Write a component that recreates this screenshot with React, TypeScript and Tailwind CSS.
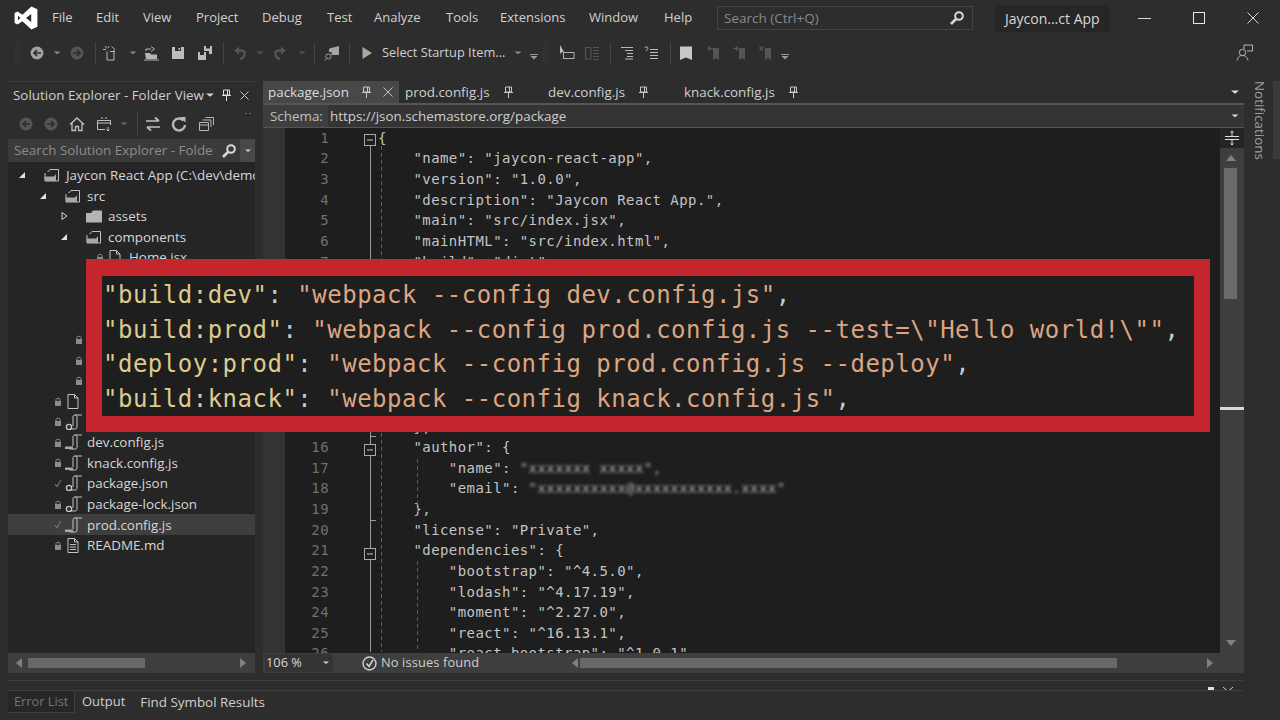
import React from "react";

const ui = "font-['Open_Sans','Noto_Sans',sans-serif]";
const mono = "font-['DejaVu_Sans_Mono','Liberation_Mono',monospace]";

type P = { c?: string };
const I = ({ children, w = 16, h = 16, cls = "" }: { children: React.ReactNode; w?: number; h?: number; cls?: string }) => (
  <svg width={w} height={h} viewBox={`0 0 ${w} ${h}`} fill="none" className={"shrink-0 " + cls}>{children}</svg>
);
const Caret = ({ c = "#8a8a8a", w = 3.5 }: P & { w?: number }) => (
  <I><polygon points={`${8 - w},6.5 ${8 + w},6.5 8,${6.5 + w * 0.8}`} fill={c} /></I>
);
const Grip = () => (
  <svg width="6" height="24" className="shrink-0" fill="none"><path d="M1 1V23M4 3V23" stroke="#4a4a4a" strokeDasharray="1 2" /></svg>
);
const Sep = () => <div className="w-px h-[23px] bg-[#454545] shrink-0" />;
const Circ = ({ c, dir = 1 }: { c: string; dir?: number }) => (
  <I>
    <circle cx="8" cy="8" r="6.5" fill={c} />
    <path d={dir > 0 ? "M12 8H5M8 5L5 8L8 11" : "M4 8H11M8 5L11 8L8 11"} stroke="#2d2d2d" strokeWidth="1.7" />
  </I>
);
const Overflow = () => (
  <I><path d="M4 9.5H12" stroke="#999" /><polygon points="4.5,11 11.5,11 8,14.5" fill="#999" /></I>
);
const NewProj = () => (
  <I>
    <path d="M5 6.5V15H12V5" stroke="#b5b5b5" />
    <path d="M8 6.5H13M3 1L5 3.5M1 4.5H4M7 1L6 3M9.5 1.5L13 4.5" stroke="#b5b5b5" />
  </I>
);
const Open = () => (
  <I>
    <path d="M1 8H6L7 9.5H13V14H2Z" fill="#b5b5b5" />
    <path d="M2 6V4H7M7 1.5L10.5 4L7 6.5" stroke="#b5b5b5" />
    <path d="M0 15H15" stroke="#b5b5b5" />
  </I>
);
const Save = () => (
  <I><path fillRule="evenodd" d="M2 2H14V14H2ZM5 2V6H11V2ZM8.5 3H10V5H8.5Z" fill="#bdbdbd" /></I>
);
const SaveAll = () => (
  <I><path fillRule="evenodd" d="M7 1H15V9H12V6H7ZM9 1V3.5H13V1ZM1 7H9V15H1ZM3 7V10H7V7Z" fill="#bdbdbd" /></I>
);
const Undo = ({ flip = false }: { flip?: boolean }) => (
  <I cls={flip ? "-scale-x-100" : ""}>
    <path d="M4 5.5H9.5C14 5.5 14 12.5 8 14" stroke="#555" strokeWidth="2.4" />
    <polygon points="7,1.5 7,9.5 2,5.5" fill="#555" />
  </I>
);
const FindWin = () => (
  <I>
    <circle cx="4.5" cy="11.5" r="2.6" stroke="#a0a0a0" />
    <path d="M2.5 13.5L0.5 15.5" stroke="#a0a0a0" />
    <path d="M7 3L15 1V10H7.5V7H5V4Z" fill="#a5a5a5" />
  </I>
);
const Play = () => <I><polygon points="3.5,2 13,8 3.5,14" fill="#a8a8a8" /></I>;
const Cursor = () => (
  <I><polygon points="1,0 1,9 3,7 5,7" fill="#bbb" /><rect x="4.5" y="7.5" width="10.5" height="6" stroke="#b0b0b0" /></I>
);
const DimList = () => (
  <I><path d="M1.5 2.5H7V14H1.5ZM9 2.5H15M9 5.5H15M9 8.5H15M9 11.5H15M9 14.5H15" stroke="#555" /></I>
);
const Lines = ({ q = false }: { q?: boolean }) => (
  <I>
    {q ? <path d="M1 3C1 1.5 4 1.5 4 3C4 4.5 2.5 4.5 2.5 6" stroke="#bbb" /> : <path d="M2 2.5H14" stroke="#bbb" />}
    <path d={q ? "M6 4.5H14M6 7.5H14M6 10.5H14M6 13.5H14" : "M6 5.5H14M8 8.5H14M8 11.5H14M6 14H14"} stroke="#bbb" />
  </I>
);
const Bookmark = () => <I><path d="M2 1.5H14V15L8 12.5L2 15Z" fill="#c8c8c8" /></I>;
const DimMark = ({ kind }: { kind: number }) => (
  <I>
    <path d="M7 3H13V15L10 13L7 15Z" fill="#555" />
    {kind === 0 && <path d="M7 3.5H2M4 1.5L2 3.5L4 5.5" stroke="#555" strokeWidth="1.3" />}
    {kind === 1 && <path d="M1 3.5H6M4 1.5L6 3.5L4 5.5" stroke="#555" strokeWidth="1.3" />}
    {kind === 2 && <path d="M1.5 1.5L5.5 5.5M5.5 1.5L1.5 5.5" stroke="#555" strokeWidth="1.3" />}
  </I>
);
const LiveShare = () => (
  <svg width="18" height="18" viewBox="0 0 18 18" fill="none" className="shrink-0">
    <circle cx="6.5" cy="8.5" r="3.2" stroke="#b5b5b5" />
    <path d="M1 16.5C2 12.5 4 11.5 6.5 11.5C9 11.5 11 12.5 12 16.5" stroke="#b5b5b5" />
    <path d="M8 5V1H16.5V7H11" stroke="#b5b5b5" />
  </svg>
);
const Pin = ({ c = "#c8c8c8" }: P) => (
  <I w={9} h={12}>
    <path d="M1.5 1H7.5V6H1.5Z" stroke={c} />
    <path d="M5.5 1V6M0 6.5H9M4.5 7V12" stroke={c} />
  </I>
);
const Mag = ({ c = "#d8d8d8" }: P) => (
  <I>
    <circle cx="10" cy="6" r="3.8" stroke={c} strokeWidth="2" />
    <path d="M7 9L2 14" stroke={c} strokeWidth="2.6" />
  </I>
);
const VsLogo = () => (
  <svg width="24" height="24" viewBox="0 0 24 24" className="shrink-0">
    <path
      fillRule="evenodd"
      fill="#ffffff"
      d="M17.4 .6L23.4 3.2V20.8L17.4 23.4L8.4 15.2L3.6 18.6L.6 17V7L3.6 5.4L8.4 8.8ZM17.2 8L12 12L17.2 16ZM4 9.8V14.2L6.4 12Z"
    />
  </svg>
);

const FolderOpen = () => (
  <I w={17} h={14}>
    <path d="M1 5V13H14.5V1.5H6L4.5 3.5H3.5" stroke="#c0c0c0" />
    <path d="M0.5 8.5H10L12 6V13H1Z" fill="#a8a8a8" />
  </I>
);
const FolderShut = () => (
  <I w={17} h={13}><path d="M0 3H5L7 .5H16V12.5H0Z" fill="#b4b4b4" /></I>
);
const JsFile = ({ dot = false }: { dot?: boolean }) => (
  <I w={18} h={16}>
    <path d="M5 12V2.5C5 1.5 6 1 7 1H16M7 1C8 1 9 1.5 9 3V13.5C9 14.5 8 15 7 15H1.5" stroke="#c4c4c4" transform="translate(4 0)" />
    {dot ? (
      <circle cx="5" cy="13" r="2.6" stroke="#c4c4c4" strokeWidth="1.4" />
    ) : (
      <path d="M1 12.5H9V15H1Z" fill="#a8a8a8" />
    )}
  </I>
);
const Doc = ({ lines = false }: { lines?: boolean }) => (
  <I w={12} h={15}>
    <path d="M1 .5H7.5L11 4V14.5H1ZM7.5 .5V4H11" stroke="#c4c4c4" />
    {lines && <path d="M3 6.5H9M3 9H9M3 11.5H9" stroke="#c4c4c4" />}
  </I>
);
const Lock = () => (
  <I w={8} h={9}><path d="M2 4V2.5C2 .8 6 .8 6 2.5V4" stroke="#8c8c8c" /><rect x="1" y="4" width="6" height="5" fill="#8c8c8c" /></I>
);
const Check = () => (
  <I w={8} h={9}><path d="M1 5L3 7.5L7 1" stroke="#777" strokeWidth="1.1" /></I>
);
const ExpOpen = () => <I w={10} h={10}><polygon points="8,2 8,8 2,8" fill="#e0e0e0" /></I>;
const ExpShut = () => <I w={10} h={10}><polygon points="3,1.5 8,5 3,8.5" stroke="#d8d8d8" /></I>;

const TreeRow = ({
  pl, exp, status, icon, text, selected,
}: { pl: string; exp?: React.ReactNode; status?: React.ReactNode; icon?: React.ReactNode; text?: string; selected?: boolean }) => (
  <div className={`flex items-center h-[20.55px] shrink-0 ${pl} ${selected ? "bg-[#3e3e3e]" : ""}`}>
    <div className="w-[10px] mr-[6px] flex justify-center shrink-0">{exp}</div>
    <div className="w-[8px] mr-[3px] flex justify-center shrink-0">{status}</div>
    <div className="w-[16px] mr-[6px] flex justify-center shrink-0">{icon}</div>
    <span className="whitespace-nowrap text-[13.4px] text-[#d6d6d6]">{text}</span>
  </div>
);

const TreePanel = () => (
  <div className="flex flex-col flex-1 min-h-0 overflow-hidden bg-[#252526] pt-[3px]">
    <TreeRow pl="pl-[9px]" exp={<ExpOpen />} icon={<FolderOpen />} text="Jaycon React App (C:\dev\demo" />
    <TreeRow pl="pl-[30px]" exp={<ExpOpen />} icon={<FolderOpen />} text="src" />
    <TreeRow pl="pl-[51px]" exp={<ExpShut />} icon={<FolderShut />} text="assets" />
    <TreeRow pl="pl-[51px]" exp={<ExpOpen />} icon={<FolderOpen />} text="components" />
    <TreeRow pl="pl-[72px]" status={<Lock />} icon={<Doc />} text="Home.jsx" />
    <TreeRow pl="pl-[30px]" />
    <TreeRow pl="pl-[30px]" />
    <TreeRow pl="pl-[30px]" />
    <TreeRow pl="pl-[51px]" status={<Lock />} />
    <TreeRow pl="pl-[51px]" status={<Lock />} />
    <TreeRow pl="pl-[51px]" status={<Lock />} />
    <TreeRow pl="pl-[30px]" status={<Lock />} icon={<Doc />} />
    <TreeRow pl="pl-[30px]" status={<Lock />} icon={<JsFile dot />} />
    <TreeRow pl="pl-[30px]" status={<Lock />} icon={<JsFile />} text="dev.config.js" />
    <TreeRow pl="pl-[30px]" status={<Lock />} icon={<JsFile />} text="knack.config.js" />
    <TreeRow pl="pl-[30px]" status={<Check />} icon={<JsFile dot />} text="package.json" />
    <TreeRow pl="pl-[30px]" status={<Lock />} icon={<JsFile dot />} text="package-lock.json" />
    <TreeRow pl="pl-[30px]" status={<Check />} icon={<JsFile />} text="prod.config.js" selected />
    <TreeRow pl="pl-[30px]" status={<Lock />} icon={<Doc lines />} text="README.md" />
  </div>
);

const HScroll = ({ thumb, cls }: { thumb: string; cls: string }) => (
  <div className={`flex items-center h-[20px] bg-[#3e3e3e] ${cls}`}>
    <I w={10} h={12} cls="ml-[5px] mr-[5px]"><polygon points="9,1 9,11 3,6" fill="#808080" /></I>
    <div className={`h-[10px] bg-[#686868] ${thumb}`} />
    <I w={10} h={12} cls="ml-auto mr-[7px]"><polygon points="2,1 2,11 8,6" fill="#808080" /></I>
  </div>
);

const lines: [string, React.ReactNode][] = [
  ["1", "{"],
  ["2", `    "name": "jaycon-react-app",`],
  ["3", `    "version": "1.0.0",`],
  ["4", `    "description": "Jaycon React App.",`],
  ["5", `    "main": "src/index.jsx",`],
  ["6", `    "mainHTML": "src/index.html",`],
  ["7", `    "build": "dist",`],
  ["8", ""], ["9", ""], ["10", ""], ["11", ""], ["12", ""], ["13", ""], ["14", ""],
  ["15", `    },`],
  ["16", `    "author": {`],
  ["17", <>{`        "name": `}<span className="blur-[1.6px] text-[#b4b4b4]">{`"xxxxxxx xxxxx",`}</span></>],
  ["18", <>{`        "email": `}<span className="blur-[1.6px] text-[#b4b4b4]">{`"xxxxxxxxxx@xxxxxxxxxxx.xxxx"`}</span></>],
  ["19", `    },`],
  ["20", `    "license": "Private",`],
  ["21", `    "dependencies": {`],
  ["22", `        "bootstrap": "^4.5.0",`],
  ["23", `        "lodash": "^4.17.19",`],
  ["24", `        "moment": "^2.27.0",`],
  ["25", `        "react": "^16.13.1",`],
  ["26", `        "react-bootstrap": "^1.0.1",`],
];

const FoldBox = ({ y }: { y: number }) => (
  <g>
    <rect x="79.5" y={y + 0.5} width="11" height="11" fill="#1e1e1e" stroke="#a8a8a8" />
    <path d={`M82 ${y + 6}H88`} stroke="#c8c8c8" />
  </g>
);

const Guides = () => (
  <svg className="absolute left-0 top-0 pointer-events-none" width="160" height="524" fill="none">
    <path d="M85.5 18V524M85.5 308.5H91M85.5 392.5H91" stroke="#9a9a9a" />
    <path d="M96.5 18V524" stroke="#5c5c5c" strokeDasharray="4 3" />
    <path d="M132.5 331V388M132.5 433V524" stroke="#5c5c5c" strokeDasharray="4 3" />
    <FoldBox y={6} />
    <FoldBox y={316} />
    <FoldBox y={420} />
  </svg>
);

const Tk = ({ t, c }: { t: string; c: string }) => <span className={c}>{t}</span>;
const key = "text-[#dccb8d]";
const str = "text-[#dba582]";
const pun = "text-[#b9cfd8]";
const BigLine = ({ k, v }: { k: string; v: string }) => (
  <div className={`h-[34.5px] flex items-center whitespace-pre ${mono} text-[24px] tracking-[0.5px] -ml-[1px]`}>
    <Tk t={k} c={key} /><Tk t=": " c={pun} /><Tk t={v} c={str} /><Tk t="," c={pun} />
  </div>
);

const menu: [string, string][] = [
  ["File", "w-[44px]"], ["Edit", "w-[47px]"], ["View", "w-[53px]"], ["Project", "w-[66px]"], ["Debug", "w-[65px]"],
  ["Test", "w-[47px]"], ["Analyze", "w-[72px]"], ["Tools", "w-[54px]"], ["Extensions", "w-[89px]"], ["Window", "w-[75px]"], ["Help", "w-[53px]"],
];

export default function App() {
  return (
    <div className={`relative w-[1280px] h-[720px] overflow-hidden bg-[#2d2d2d] text-[#d4d4d4] flex flex-col ${ui}`}>
      {/* Title bar */}
      <div className="flex items-center h-[36px] shrink-0">
        <div className="w-[52px] pl-[14px] shrink-0"><VsLogo /></div>
        {menu.map(([m, w]) => (
          <span key={m} className={`${w} text-[13px] text-[#d0d0d0] shrink-0`}>{m}</span>
        ))}
        <div className="flex items-center justify-between w-[256px] h-[24px] border border-[#424242] pl-[6px] pr-[7px] shrink-0">
          <span className="text-[13.5px] text-[#8a8a8a]">Search (Ctrl+Q)</span>
          <Mag />
        </div>
        <div className="flex items-center w-[115px] h-[27px] ml-[22px] pl-[10px] bg-[#262626] text-[14px] text-[#d8d8d8] shrink-0 whitespace-nowrap">Jaycon...ct App</div>
        <div className="ml-[28px] w-[13px] h-px bg-[#d8d8d8] shrink-0" />
        <div className="ml-[42px] w-[12px] h-[12px] border border-[#e8e8e8] shrink-0" />
        <svg width="12" height="12" className="ml-[42px] shrink-0" fill="none"><path d="M.5 .5L11.5 11.5M11.5 .5L.5 11.5" stroke="#d8d8d8" /></svg>
      </div>

      {/* Toolbar */}
      <div className="flex items-center h-[34px] shrink-0 pl-[15px] pr-[26px]">
        <Grip />
        <div className="ml-[8px]"><Circ c="#a0a0a0" /></div>
        <div className="ml-[4px]"><Caret /></div>
        <div className="ml-[4px]"><Circ c="#555555" dir={-1} /></div>
        <div className="ml-[10px]"><Sep /></div>
        <div className="ml-[6px]"><NewProj /></div>
        <div className="ml-[7px]"><Caret /></div>
        <div className="ml-[3px]"><Open /></div>
        <div className="ml-[10px]"><Save /></div>
        <div className="ml-[11px]"><SaveAll /></div>
        <div className="ml-[10px]"><Sep /></div>
        <div className="ml-[8px]"><Undo /></div>
        <div className="ml-[4px]"><Caret c="#555" /></div>
        <div className="ml-[4px]"><Undo flip /></div>
        <div className="ml-[6px]"><Caret c="#555" /></div>
        <div className="ml-[4px]"><Sep /></div>
        <div className="ml-[9px]"><FindWin /></div>
        <div className="ml-[9px]"><Sep /></div>
        <div className="ml-[9px]"><Play /></div>
        <span className="ml-[7px] w-[128px] text-[12.8px] text-[#d0d0d0] whitespace-nowrap">Select Startup Item...</span>
        <Caret />
        <Overflow />
        <div className="ml-[1px]"><Grip /></div>
        <div className="ml-[10px]"><Cursor /></div>
        <div className="ml-[9px]"><DimList /></div>
        <div className="ml-[10px]"><Sep /></div>
        <div className="ml-[8px]"><Lines /></div>
        <div className="ml-[9px]"><Lines q /></div>
        <div className="ml-[10px]"><Sep /></div>
        <div className="ml-[7px]"><Bookmark /></div>
        <div className="ml-[12px]"><DimMark kind={0} /></div>
        <div className="ml-[10px]"><DimMark kind={1} /></div>
        <div className="ml-[10px]"><DimMark kind={2} /></div>
        <div className="ml-[3px]"><Overflow /></div>
        <div className="ml-auto"><LiveShare /></div>
      </div>

      {/* Main area */}
      <div className="flex h-[592px] mt-[11px] pl-[8px] shrink-0">
        {/* Solution explorer */}
        <div className="flex flex-col w-[247px] shrink-0 border-t border-[#3c3c3c]">
          <div className="flex items-center h-[26px] pl-[5px] shrink-0">
            <span className="text-[13.4px] text-[#cfcfcf] whitespace-nowrap w-[189px]">Solution Explorer - Folder View</span>
            <Caret c="#d8d8d8" w={4} />
            <div className="ml-[4px]"><Pin c="#dcdcdc" /></div>
            <svg width="9" height="9" className="ml-[9px]" fill="none"><path d="M.5 .5L8.5 8.5M8.5 .5L.5 8.5" stroke="#c8c8c8" /></svg>
          </div>
          <div className="flex items-center h-[31px] pl-[10px] shrink-0">
            <Circ c="#555" />
            <div className="ml-[9px]"><Circ c="#555" dir={-1} /></div>
            <I w={16} h={16} cls="ml-[10px]"><path d="M1 8.5L8 2L15 8.5M3 7V14.5H6.5V10.5H9.5V14.5H13V7" stroke="#c0c0c0" strokeWidth="1.3" /></I>
            <I w={16} h={16} cls="ml-[11px]"><path d="M1.5 4.5H14.5V9M1.5 4.5V13.5H9M1.5 7H14.5" stroke="#c0c0c0" /><path d="M5 2H7M9 2H11M12 11V15M10.5 13.5L12 15L13.5 13.5" stroke="#c0c0c0" /></I>
            <div className="ml-[4px]"><Caret c="#666" /></div>
            <div className="ml-[5px]"><Sep /></div>
            <I w={16} h={16} cls="ml-[7px]"><path d="M1 5H14M10 1.5L14 5M15 11H2M6 14.5L2 11" stroke="#c0c0c0" strokeWidth="1.7" /></I>
            <I w={16} h={16} cls="ml-[10px]"><path d="M12.5 4.5A6 6 0 1 0 14 9" stroke="#b8b8b8" strokeWidth="2.4" /><polygon points="9,1 14.5,1 14.5,6.5" fill="#b8b8b8" /></I>
            <I w={16} h={16} cls="ml-[11px]"><path d="M1.5 6.5H10.5V14.5H1.5ZM1.5 9H10.5M4.5 4H13V11M7.5 1.5H15.5V9" stroke="#b8b8b8" /></I>
            <svg width="6" height="2" className="ml-auto mr-[4px] self-start mt-[5px]" fill="none"><path d="M0 .5H6" stroke="#6a6a6a" strokeDasharray="2 2" /></svg>
          </div>
          <div className="flex items-center h-[23px] bg-[#3a3a3a] pl-[6px] shrink-0">
            <span className="w-[200px] overflow-hidden whitespace-nowrap text-[13.4px] text-[#8c8c8c]">Search Solution Explorer - Folder View</span>
            <div className="ml-[7px]"><Mag /></div>
            <div className="ml-auto w-[15px] h-full bg-[#484848] flex items-center justify-center"><Caret c="#d0d0d0" w={3} /></div>
          </div>
          <TreePanel />
          <HScroll thumb="w-[117px]" cls="shrink-0" />
        </div>

        {/* Editor */}
        <div className="flex flex-col w-[981px] ml-[8px] shrink-0">
          <div className="flex items-center h-[22px] shrink-0">
            <div className="flex items-center w-[136px] h-full bg-[#484848] pl-[5px] shrink-0">
              <span className="w-[94px] pt-[1px] text-[13.4px] text-[#dcdcdc] whitespace-nowrap">package.json</span>
              <Pin c="#c8c8c8" />
              <svg width="10" height="10" className="ml-[12px]" fill="none"><path d="M.5 .5L9.5 9.5M9.5 .5L.5 9.5" stroke="#c0c0c0" /></svg>
            </div>
            <span className="ml-[6px] w-[95px] pt-[1px] text-[13.4px] text-[#cfcfcf]">prod.config.js</span>
            <div className="w-[16px] flex justify-center"><Pin /></div>
            <span className="ml-[32px] w-[87px] pt-[1px] text-[13.4px] text-[#cfcfcf]">dev.config.js</span>
            <div className="w-[16px] flex justify-center"><Pin /></div>
            <span className="ml-[33px] w-[101px] pt-[1px] text-[13.4px] text-[#cfcfcf]">knack.config.js</span>
            <div className="w-[16px] flex justify-center"><Pin /></div>
            <div className="ml-auto mr-[1px]"><Caret c="#e0e0e0" w={4} /></div>
          </div>
          <div className="h-[2px] bg-[#555555] shrink-0" />
          <div className="flex items-center h-[23px] bg-[#343434] border-b border-[#555555] shrink-0">
            <div className="flex items-center h-full w-[65px] bg-[#3e3e3e] pl-[7px] pt-[1px] text-[13.4px] text-[#c0c0c0] shrink-0">Schema:</div>
            <span className="ml-[2px] pt-[1px] text-[13.4px] text-[#cfcfcf]">https://json.schemastore.org/package</span>
            <div className="ml-auto mr-[1px]"><Caret c="#d8d8d8" w={3.5} /></div>
          </div>
          <div className="flex flex-1 min-h-0">
            <div className="w-[22px] bg-[#333333] shrink-0" />
            <div className={`relative flex-1 min-w-0 overflow-hidden bg-[#1e1e1e] ${mono} text-[14px] tracking-[0.43px] text-[#c4c4c4]`}>
              {lines.map(([n, t]) => (
                <div key={n} className="flex items-center h-[20.63px]">
                  <span className="w-[44px] text-right text-[#707070] shrink-0">{n}</span>
                  <span className="pl-[49px] whitespace-pre">{t}</span>
                </div>
              ))}
              <Guides />
            </div>
            <div className="relative flex flex-col items-center w-[24px] bg-[#3e3e3e] shrink-0">
              <div className="flex items-center justify-center w-full h-[20px] bg-[#252526]">
                <I w={14} h={16}><path d="M0 6.5H14M0 9.5H14M7 1V6M7 10V15M5.5 2.5L7 1L8.5 2.5M5.5 13.5L7 15L8.5 13.5" stroke="#e0e0e0" /></I>
              </div>
              <I w={12} h={8} cls="mt-[6px] -ml-[3px]"><polygon points="1,7 11,7 6,1" fill="#808080" /></I>
              <div className="w-[13px] h-[131px] mt-[6px] -ml-[3px] bg-[#6a6a6a]" />
              <div className="w-full h-[3px] mt-[108px] bg-[#d8d8d8]" />
              <I w={12} h={8} cls="mt-auto mb-[6px] -ml-[3px]"><polygon points="1,1 11,1 6,7" fill="#808080" /></I>
            </div>
          </div>
          <div className="flex items-center h-[20px] bg-[#3e3e3e] shrink-0">
            <div className="flex items-center w-[68px] h-[18px] ml-[2px] bg-[#343434] pl-[1px] text-[12.8px] text-[#d8d8d8] shrink-0">
              <span>106 %</span>
              <div className="ml-auto -mr-[1px]"><Caret c="#d8d8d8" w={3} /></div>
            </div>
            <I w={15} h={15} cls="ml-[29px]"><circle cx="7.5" cy="7.5" r="6.5" stroke="#d0d0d0" strokeWidth="1.4" /><path d="M4.5 7.5L7 10.5L11 4" stroke="#d0d0d0" strokeWidth="1.6" /></I>
            <span className="ml-[4px] text-[12.8px] text-[#cfcfcf] w-[190px] whitespace-nowrap tracking-[0.15px]">No issues found</span>
            <I w={8} h={12}><polygon points="7,1 7,11 1,6" fill="#808080" /></I>
            <div className="ml-[1px] w-[537px] h-[10px] bg-[#686868] shrink-0" />
            <I w={10} h={12} cls="ml-auto mr-[29px]"><polygon points="2,1 2,11 8,6" fill="#808080" /></I>
          </div>
        </div>

        {/* Notifications */}
        <div className="flex-1 flex justify-end items-start">
          <span className="[writing-mode:vertical-rl] text-[13.4px] text-[#a0a0a0] mr-[6px] leading-[14px]">Notifications</span>
          <div className="w-[7px] h-[78px] bg-[#3a3a3a]" />
        </div>
      </div>

      {/* Bottom panel */}
      <div className="flex flex-col mt-[7px] ml-[8px] w-[1235px] shrink-0 border-t border-[#3f3f3f]">
        <div className="h-[9px] relative overflow-hidden">
          <span className="absolute left-[5px] top-[4px] text-[12.8px] text-[#9a9a9a]">Error List</span>
          <div className="absolute right-[29px] top-[6px] w-[6px] h-[6px] bg-[#e0e0e0]" />
          <svg width="12" height="9" className="absolute right-[9px] top-[5px]" fill="none"><path d="M1 1L6 5.5L11 1" stroke="#d0d0d0" /></svg>
        </div>
        <div className="flex items-center h-[23px] border-t border-[#3f3f3f]">
          <div className="flex items-center h-full w-[67px] pl-[6px] bg-[#262626] text-[12.8px] text-[#757575] shrink-0 border-r border-b border-[#3f3f3f]">Error List</div>
          <span className="ml-[7px] text-[13px] text-[#cfcfcf]">Output</span>
          <span className="ml-[15px] text-[13.4px] text-[#cfcfcf]">Find Symbol Results</span>
        </div>
      </div>

      {/* Highlight callout */}
      <div className="absolute left-[86px] top-[259px] w-[1124px] h-[173px] border-[16px] border-t-[17px] border-[#c4262e] bg-[#1e1e1e] pl-[2px] pt-[2px]">
        <BigLine k={`"build:dev"`} v={`"webpack --config dev.config.js"`} />
        <BigLine k={`"build:prod"`} v={`"webpack --config prod.config.js --test=\\"Hello world!\\""`} />
        <BigLine k={`"deploy:prod"`} v={`"webpack --config prod.config.js --deploy"`} />
        <BigLine k={`"build:knack"`} v={`"webpack --config knack.config.js"`} />
      </div>
    </div>
  );
}
